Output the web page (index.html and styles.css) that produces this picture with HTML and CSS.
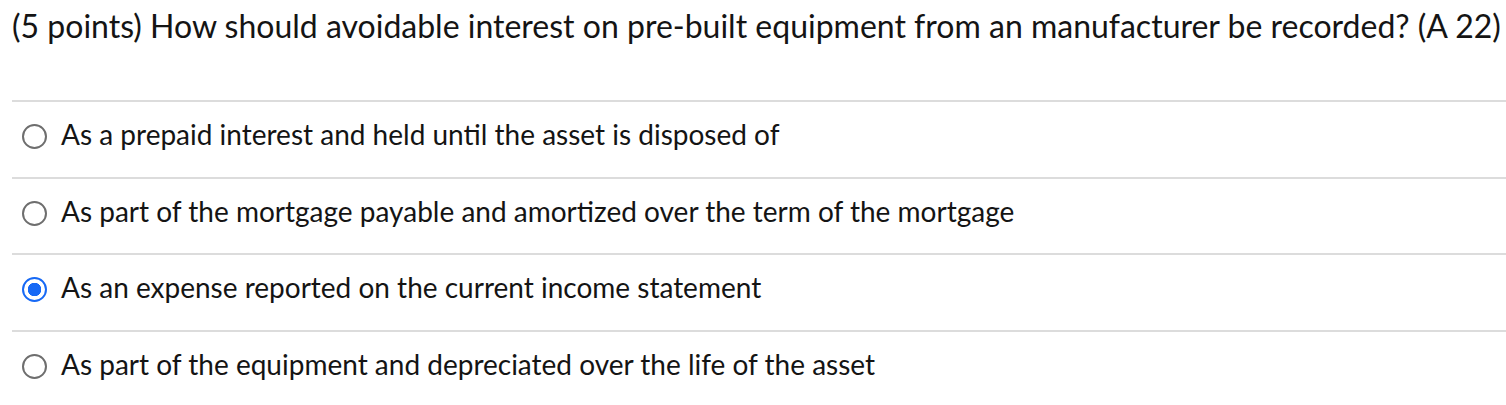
FILE: index.html
```html
<!DOCTYPE html>
<html>
<head>
<meta charset="utf-8">
<link rel="stylesheet" href="styles.css">
</head>
<body>
<div class="question">
  <div class="title">(5 points) How should avoidable interest on pre-built equipment from an manufacturer be recorded? (A 22)</div>
  <div class="answers">
    <div class="answer"><span class="radio"></span><span class="label">As a prepaid interest and held until the asset is disposed of</span></div>
    <div class="answer"><span class="radio"></span><span class="label">As part of the mortgage payable and amortized over the term of the mortgage</span></div>
    <div class="answer"><span class="radio checked"></span><span class="label">As an expense reported on the current income statement</span></div>
    <div class="answer"><span class="radio"></span><span class="label">As part of the equipment and depreciated over the life of the asset</span></div>
  </div>
</div>
</body>
</html>
```
FILE: styles.css
```css
html, body { margin: 0; padding: 0; background: #fff; }
body { font-family: Lato, "Noto Sans", sans-serif; color: #141414; overflow: hidden; }
.question { padding: 6px 0 0 12px; }
.title { font-size: 32px; line-height: 40px; white-space: nowrap; }
.answers { margin-top: 54px; }
.answer {
  display: flex; align-items: flex-start; gap: 14px;
  box-sizing: border-box; height: 76.67px;
  border-top: 2px solid #dcdcdc;
  padding: 16px 0 0 10px;
}
.label { font-size: 28px; line-height: 32px; white-space: nowrap; }
.radio {
  width: 25px; height: 25px; border-radius: 50%; margin-top: 6px;
  border: 2px solid #6e6e6e; box-sizing: border-box; flex: none;
}
.radio.checked {
  border: 2px solid #1769f5;
  background: radial-gradient(circle, #1769f5 0 6.5px, #fff 7px);
}
```
